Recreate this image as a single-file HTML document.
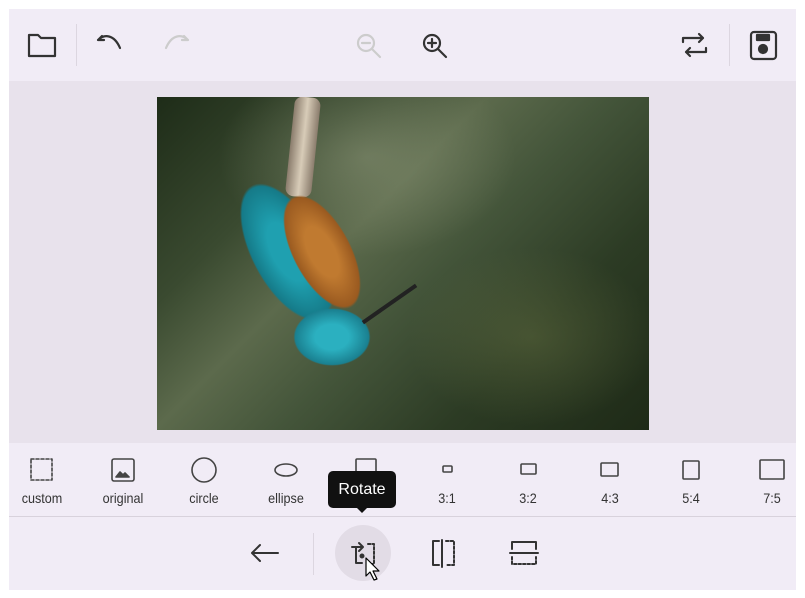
<!DOCTYPE html><html><head><style>
body{margin:0;width:805px;height:598px;background:#fff;position:relative;overflow:hidden;font-family:"Liberation Sans",sans-serif}
.a{position:absolute}
svg{position:absolute}
.lbl{position:absolute;top:490px;font-size:14px;color:#333;width:80px;text-align:center;transform:scaleX(.9)}
</style></head><body>
<div class="a" style="left:9px;top:9px;width:787px;height:72px;background:#f1ecf6"></div>
<div class="a" style="left:9px;top:81px;width:787px;height:362px;background:#e8e2ec"></div>
<div class="a" style="left:9px;top:443px;width:787px;height:73px;background:#f1ecf6"></div>
<div class="a" style="left:9px;top:516px;width:787px;height:1px;background:#d8d2dc"></div>
<div class="a" style="left:9px;top:517px;width:787px;height:73px;background:#f1ecf6"></div>
<div class="a" style="left:76px;top:24px;width:1px;height:42px;background:#dcd6e0"></div>
<div class="a" style="left:729px;top:24px;width:1px;height:42px;background:#dcd6e0"></div>
<div class="a" style="left:313px;top:533px;width:1px;height:42px;background:#dcd6e0"></div>
<div class="a" style="left:157px;top:97px;width:492px;height:333px;overflow:hidden;background:linear-gradient(135deg,#1e2c18 0%,#3a4a30 25%,#5c6a4c 40%,#44553a 55%,#2c3b24 75%,#1e2a17 100%)">
<div class="a" style="left:60px;top:-40px;width:300px;height:200px;background:radial-gradient(ellipse,rgba(140,150,120,.55),transparent 70%)"></div>
<div class="a" style="left:250px;top:150px;width:250px;height:180px;background:radial-gradient(ellipse,rgba(110,120,70,.4),transparent 70%)"></div>
<div class="a" style="left:133px;top:0;width:26px;height:100px;background:linear-gradient(90deg,#8a7c6c,#d8ccb8,#8a7c6c);transform:rotate(6deg);border-radius:8px"></div>
<div class="a" style="left:95px;top:80px;width:70px;height:150px;background:radial-gradient(ellipse,#1fa0b0 30%,#157a88 68%,transparent 71%);transform:rotate(-28deg)"></div>
<div class="a" style="left:135px;top:90px;width:60px;height:130px;background:radial-gradient(ellipse,#c07a30 30%,#9a5a20 65%,transparent 68%);transform:rotate(-28deg)"></div>
<div class="a" style="left:135px;top:210px;width:80px;height:60px;background:radial-gradient(ellipse,#2bb0c0 30%,#1a8090 65%,transparent 68%)"></div>
<div class="a" style="left:200px;top:205px;width:65px;height:4px;background:#222;transform:rotate(-35deg)"></div>
</div>
<svg width="805" height="598" style="left:0;top:0" fill="none" stroke-linecap="round" stroke-linejoin="round">
<g stroke="#333" stroke-width="2.2">
<path d="M29 35h9l3 3h14v18H29z"/>
<path d="M98 40l4-4M98 40h6M98 40c6-6 16-6 22 8"/>
<circle cx="432" cy="43" r="8"/><path d="M438 49l8 8M432 39v8M428 43h8"/>
<path d="M683 42v-4h20M699 34l4 4-4 4M706 48v4H686M690 56l-4-4 4-4"/>
<rect x="751" y="32" width="25" height="27" rx="3"/><rect x="757" y="35" width="12" height="5" fill="#333"/><circle cx="763" cy="49" r="4" fill="#333"/>
</g>
<g stroke="#ccc" stroke-width="2.2">
<path d="M188 40l-4-4M188 40h-6M188 40c-6-6-16-6-22 8"/>
<circle cx="366" cy="43" r="8"/><path d="M372 49l8 8M362 43h8"/>
</g>
<g stroke="#444" stroke-width="1.6">
<rect x="31" y="459" width="21" height="21" stroke-dasharray="3 2"/>
<rect x="112" y="459" width="22" height="22" rx="2"/><path d="M116 477l4-5 3 3 2-2 4 4z" fill="#444"/>
<circle cx="204" cy="470" r="12"/>
<ellipse cx="286" cy="470" rx="11" ry="6"/>
<rect x="356" y="459" width="20" height="14" rx="1"/>
<rect x="443" y="466" width="9" height="6" rx="1"/>
<rect x="521" y="464" width="15" height="10" rx="1"/>
<rect x="601" y="463" width="17" height="13" rx="1"/>
<rect x="683" y="461" width="16" height="18" rx="1"/>
<rect x="760" y="460" width="24" height="19" rx="1"/>
</g>
<circle cx="363" cy="553" r="28" fill="#e2dce6"/>
<g stroke="#333" stroke-width="2">
<path d="M252 553h26M252 553l8-8M252 553l8 8"/>
<path d="M356 547v16h6M352 547h10M359 543l4 4-4 4"/><path d="M368 544h6v20h-4" stroke-dasharray="2.5 2"/><circle cx="362" cy="556" r="1.5" fill="#333"/>
<path d="M442 540v27M439 541h-6v24h6"/><path d="M446 541h8v24h-8" stroke-dasharray="2.5 2"/>
<path d="M510 553h28M512 549v-7h24v7"/><path d="M512 557v7h24v-7" stroke-dasharray="2.5 2"/>
</g>
<path d="M366 558v18l4-4 4 8 3-1-4-8h6z" fill="#fff" stroke="#000" stroke-width="1.2"/>
</svg>
<div class="lbl" style="left:2px">custom</div>
<div class="lbl" style="left:83px">original</div>
<div class="lbl" style="left:164px">circle</div>
<div class="lbl" style="left:246px">ellipse</div>
<div class="lbl" style="left:407px">3:1</div>
<div class="lbl" style="left:488px">3:2</div>
<div class="lbl" style="left:570px">4:3</div>
<div class="lbl" style="left:651px">5:4</div>
<div class="lbl" style="left:732px">7:5</div>
<div class="a" style="left:328px;top:471px;width:68px;height:37px;background:#111;border-radius:5px;color:#fff;font-size:16px;text-align:center;line-height:37px">Rotate</div>
<div class="a" style="left:355px;top:506px;width:0;height:0;border:7px solid transparent;border-top-color:#111"></div>
</body></html>
